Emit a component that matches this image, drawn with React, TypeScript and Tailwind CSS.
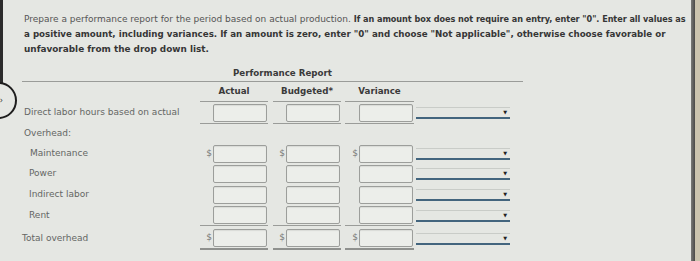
import React from 'react';

type Cell = { dollar?: boolean };

type Row = {
  label: string;
  indent: string;
  height: string;
  cells: Cell[] | null;
  dropdown?: boolean;
  rule?: 'single' | 'double';
};

const rows: Row[] = [
  { label: 'Direct labor hours based on actual', indent: 'pl-[2px]', height: 'h-[22px]', cells: [{}, {}, {}], dropdown: true, rule: 'single' },
  { label: 'Overhead:', indent: 'pl-[2px]', height: 'h-[20px]', cells: null },
  { label: 'Maintenance', indent: 'pl-[8px]', height: 'h-[20px]', cells: [{ dollar: true }, { dollar: true }, { dollar: true }], dropdown: true },
  { label: 'Power', indent: 'pl-[7px]', height: 'h-[20px]', cells: [{}, {}, {}], dropdown: true },
  { label: 'Indirect labor', indent: 'pl-[7px]', height: 'h-[21px]', cells: [{}, {}, {}], dropdown: true },
  { label: 'Rent', indent: 'pl-[7px]', height: 'h-[21px]', cells: [{}, {}, {}], dropdown: true, rule: 'single' },
  { label: 'Total overhead', indent: 'pl-0', height: 'h-[23px]', cells: [{ dollar: true }, { dollar: true }, { dollar: true }], dropdown: true, rule: 'double' },
];

// widths of the three amount columns, and the gaps after each
const colWidths = ['w-[68px] mr-[5px]', 'w-[68px] mr-[4px]', 'w-[69px] mr-[2px]'];

function AmountBox({ dollar }: Cell) {
  return (
    <div className="flex items-center justify-end pr-[1px] h-full">
      {dollar && <span className="text-[9px] text-[#777] mr-[1px]">$</span>}
      <div className="w-[54px] h-[18px] border border-[#9c9e9b] rounded-[2px] bg-[#eceeea] shadow-[inset_0_1px_1px_rgba(0,0,0,0.08)]" />
    </div>
  );
}

function Dropdown() {
  return (
    <div className="w-[94px] h-[12px] border-t border-[#c9ccc8] border-b-2 border-b-[#43657e] flex items-center justify-end pr-[3px]">
      <span className="text-[5px] leading-none text-[#222]">▼</span>
    </div>
  );
}

export default function App() {
  return (
    <div
      className="w-[700px] h-[261px] bg-[#e5e7e3] flex overflow-hidden relative text-[#5a5c5a]"
      style={{ fontFamily: '"DejaVu Sans", Verdana, sans-serif' }}
    >
      {/* left screen edge with the partly hidden nav button */}
      <div className="w-[3px] h-[84px] bg-[#2b2b2b] shrink-0" />
      <div className="absolute left-[-20px] top-[82px] w-[37px] h-[37px] rounded-full border-2 border-[#1e1e1e] flex items-center justify-end pr-[12px]">
        <span className="text-[8px] text-[#333] leading-none">›</span>
      </div>

      <div className="flex-1 min-w-0 pl-[19px]">
        <div className="pt-[12px] pl-[2px] text-[9px] leading-[15px] text-[#555] whitespace-nowrap">
          Prepare a performance report for the period based on actual production.{' '}
          <b className="text-[#363636] text-[8.15px] tracking-[-0.05px]">
            If an amount box does not require an entry, enter "0". Enter all values as
          </b>
          <br />
          <b className="text-[#363636] text-[8.7px]">
            a positive amount, including variances. If an amount is zero, enter "0" and choose "Not applicable", otherwise
            choose favorable or
          </b>
          <br />
          <b className="text-[#363636] text-[8.9px]">unfavorable from the drop down list.</b>
        </div>

        <div className="mt-[9px] w-[501px]">
          <div className="h-[16px] border-b border-[#9a9c99] flex">
            <div className="w-[211px]" />
            <span className="text-[8.7px] font-bold text-[#3a3a3a] leading-[15px]">Performance Report</span>
          </div>

          {/* column headings */}
          <div className="flex h-[20px]">
            <div className="w-[178px]" />
            {['Actual', 'Budgeted*', 'Variance'].map((h, i) => (
              <div
                key={h}
                className={`${colWidths[i]} border-b border-[#9a9c99] flex items-center justify-center text-[8.7px] font-bold text-[#3a3a3a]`}
              >
                {h}
              </div>
            ))}
          </div>

          {rows.map((r) => (
            <div key={r.label} className={`flex ${r.height} ${r.label === 'Total overhead' ? 'mt-[1px]' : ''}`}>
              <div className={`w-[178px] ${r.indent} flex items-center text-[9px] text-[#646663] whitespace-nowrap`}>
                {r.label}
              </div>
              {r.cells &&
                r.cells.map((c, i) => (
                  <div
                    key={i}
                    className={`${colWidths[i]} ${
                      r.rule === 'single' ? 'border-b border-[#9a9c99]' : r.rule === 'double' ? 'border-b-2 border-[#8f918e]' : ''
                    }`}
                  >
                    <AmountBox dollar={c.dollar} />
                  </div>
                ))}
              {r.dropdown && (
                <div className="flex items-center">
                  <Dropdown />
                </div>
              )}
            </div>
          ))}
        </div>
      </div>

      {/* right screen bezel */}
      <div className="w-[4px] h-full shrink-0 bg-gradient-to-r from-[#7a7b78] to-[#4a4a48]" />
      <div className="w-[5px] h-full shrink-0 bg-[#cbc4ae]" />
    </div>
  );
}
